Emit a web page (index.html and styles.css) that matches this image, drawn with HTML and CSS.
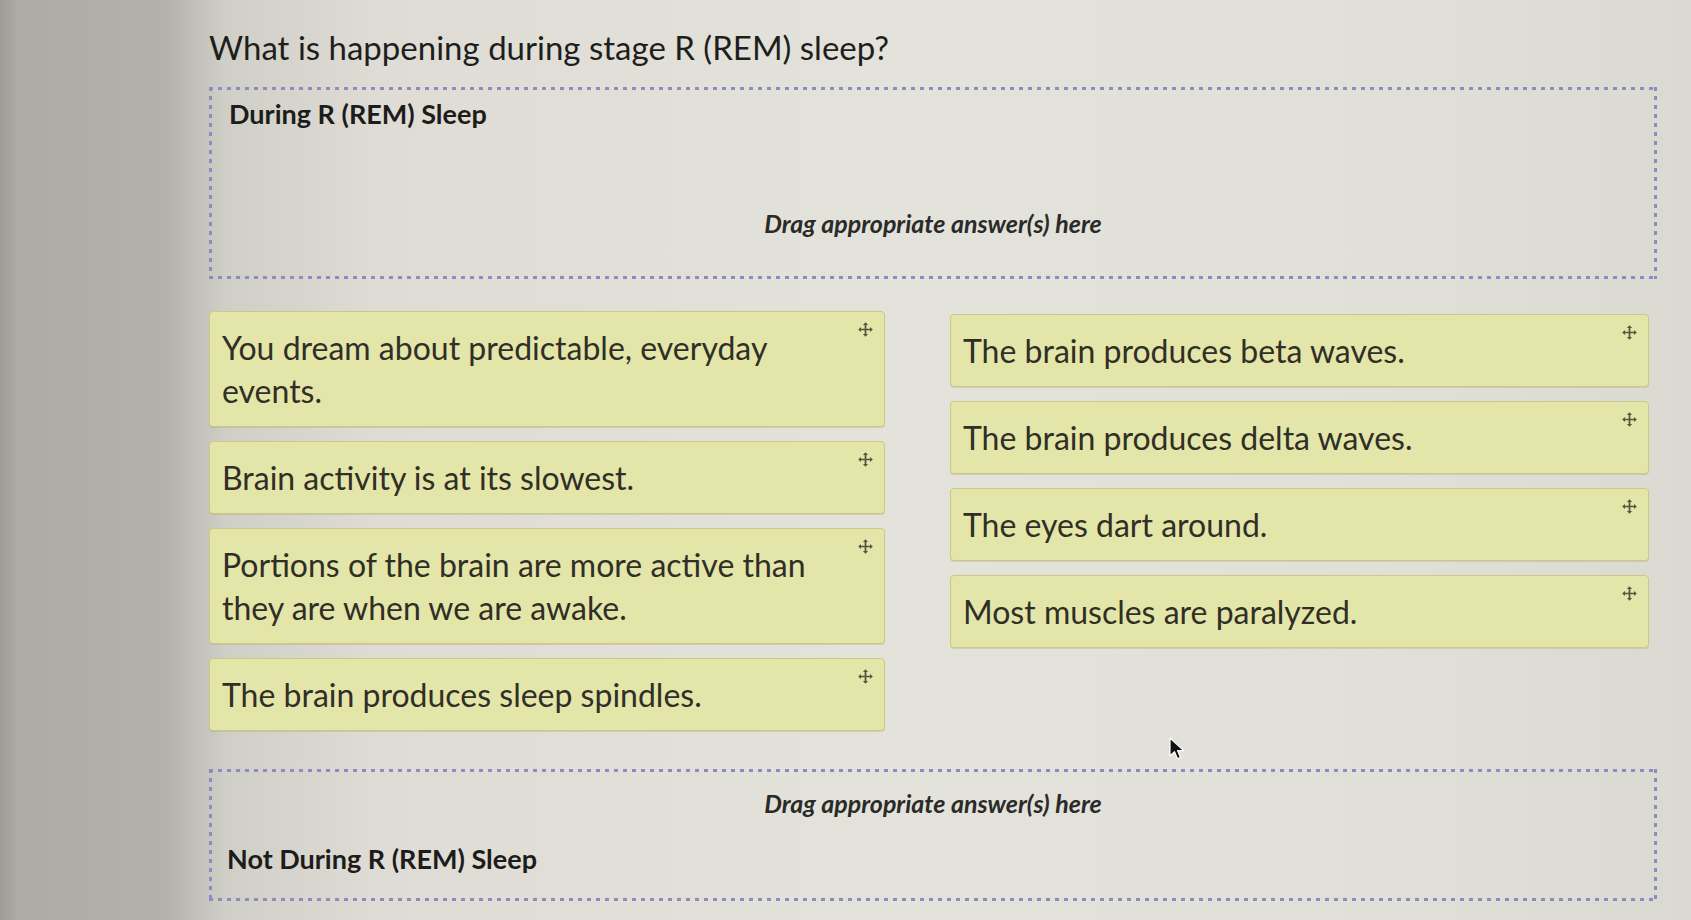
FILE: index.html
```html
<!DOCTYPE html>
<html lang="en">
<head>
<meta charset="utf-8">
<title>Stage R sleep – sorting question</title>
<link rel="stylesheet" href="styles.css">
</head>
<body>
<main class="question">
  <h1 class="prompt">What is happening during stage R (REM) sleep?</h1>

  <section class="zone zone-top">
    <h2 class="zone-label">During R (REM) Sleep</h2>
    <p class="zone-hint">Drag appropriate answer(s) here</p>
  </section>

  <div class="bank">
    <div class="col">
      <div class="card"><span>You dream about predictable, everyday events.</span><svg class="grip" viewBox="0 0 14 14"><path d="M7 2v10M2 7h10"/><path class="tip" d="M7 0.2l2.4 2.6h-4.8zM7 13.8l2.4-2.6h-4.8zM0.2 7l2.6-2.4v4.8zM13.8 7l-2.6-2.4v4.8z"/></svg></div>
      <div class="card"><span>Brain activity is at its slowest.</span><svg class="grip" viewBox="0 0 14 14"><path d="M7 2v10M2 7h10"/><path class="tip" d="M7 0.2l2.4 2.6h-4.8zM7 13.8l2.4-2.6h-4.8zM0.2 7l2.6-2.4v4.8zM13.8 7l-2.6-2.4v4.8z"/></svg></div>
      <div class="card"><span>Portions of the brain are more active than they are when we are awake.</span><svg class="grip" viewBox="0 0 14 14"><path d="M7 2v10M2 7h10"/><path class="tip" d="M7 0.2l2.4 2.6h-4.8zM7 13.8l2.4-2.6h-4.8zM0.2 7l2.6-2.4v4.8zM13.8 7l-2.6-2.4v4.8z"/></svg></div>
      <div class="card"><span>The brain produces sleep spindles.</span><svg class="grip" viewBox="0 0 14 14"><path d="M7 2v10M2 7h10"/><path class="tip" d="M7 0.2l2.4 2.6h-4.8zM7 13.8l2.4-2.6h-4.8zM0.2 7l2.6-2.4v4.8zM13.8 7l-2.6-2.4v4.8z"/></svg></div>
    </div>
    <div class="col col-right">
      <div class="card"><span>The brain produces beta waves.</span><svg class="grip" viewBox="0 0 14 14"><path d="M7 2v10M2 7h10"/><path class="tip" d="M7 0.2l2.4 2.6h-4.8zM7 13.8l2.4-2.6h-4.8zM0.2 7l2.6-2.4v4.8zM13.8 7l-2.6-2.4v4.8z"/></svg></div>
      <div class="card"><span>The brain produces delta waves.</span><svg class="grip" viewBox="0 0 14 14"><path d="M7 2v10M2 7h10"/><path class="tip" d="M7 0.2l2.4 2.6h-4.8zM7 13.8l2.4-2.6h-4.8zM0.2 7l2.6-2.4v4.8zM13.8 7l-2.6-2.4v4.8z"/></svg></div>
      <div class="card"><span>The eyes dart around.</span><svg class="grip" viewBox="0 0 14 14"><path d="M7 2v10M2 7h10"/><path class="tip" d="M7 0.2l2.4 2.6h-4.8zM7 13.8l2.4-2.6h-4.8zM0.2 7l2.6-2.4v4.8zM13.8 7l-2.6-2.4v4.8z"/></svg></div>
      <div class="card"><span>Most muscles are paralyzed.</span><svg class="grip" viewBox="0 0 14 14"><path d="M7 2v10M2 7h10"/><path class="tip" d="M7 0.2l2.4 2.6h-4.8zM7 13.8l2.4-2.6h-4.8zM0.2 7l2.6-2.4v4.8zM13.8 7l-2.6-2.4v4.8z"/></svg></div>
    </div>
  </div>

  <section class="zone zone-bottom">
    <p class="zone-hint">Drag appropriate answer(s) here</p>
    <h2 class="zone-label">Not During R (REM) Sleep</h2>
  </section>
</main>

<svg class="pointer" viewBox="0 0 16 24" aria-hidden="true"><path d="M1 1v18l4.5-4.3 3 7 3-1.3-3-6.8h6.2z" fill="#111" stroke="#fff" stroke-width="1.2" stroke-linejoin="round"/></svg>
</body>
</html>
```

FILE: styles.css
```css
html, body {
  margin: 0;
  height: 100%;
}

body {
  font-family: Lato, "Liberation Sans", sans-serif;
  color: #242420;
  background: linear-gradient(90deg, #9d9c95 0, #adaca4 18px, #b3b2aa 165px, #d0cfc7 225px, #dedcd5 380px, #e3e2db 900px, #e1e0d8 1400px, #dbdad2 100%);
  overflow: hidden;
  position: relative;
}

.question {
  width: 1448px;
  padding: 27px 0 0 209px;
  display: flex;
  flex-direction: column;
}

.prompt {
  margin: 0 0 20px;
  font-size: 33px;
  line-height: 40px;
  font-weight: 400;
  color: #1e1e1c;
}

/* Drop target drawn with square purple dots */
.zone {
  --dot: #8d8ac4;
  background:
    repeating-linear-gradient(90deg, var(--dot) 0 4px, transparent 4px 9px) top left / 100% 3px no-repeat,
    repeating-linear-gradient(90deg, var(--dot) 0 4px, transparent 4px 9px) bottom left / 100% 3px no-repeat,
    repeating-linear-gradient(180deg, var(--dot) 0 4px, transparent 4px 9px) top left / 3px 100% no-repeat,
    repeating-linear-gradient(180deg, var(--dot) 0 4px, transparent 4px 9px) top right / 3px 100% no-repeat;
  display: flex;
  flex-direction: column;
  box-sizing: border-box;
}

.zone-label {
  margin: 0;
  font-size: 27px;
  line-height: 32px;
  font-weight: 700;
  color: #1c1c1a;
}

.zone-hint {
  margin: 0;
  text-align: center;
  font-size: 25px;
  line-height: 30px;
  font-weight: 700;
  font-style: italic;
  color: #2a2a28;
}

.zone-top {
  height: 192px;
  padding: 11px 20px 0;
}

.zone-top .zone-hint {
  margin-top: 78px;
}

.zone-bottom {
  margin-top: 38px;
  height: 132px;
  padding: 19px 18px 0;
}

.zone-bottom .zone-hint {
  margin-bottom: 25px;
}

.bank {
  margin-top: 32px;
  display: grid;
  grid-template-columns: 676px 699px;
  column-gap: 65px;
  align-items: start;
}

.col {
  display: flex;
  flex-direction: column;
  gap: 14px;
}

.col-right {
  padding-top: 3px;
}

.card {
  position: relative;
  background: #e4e5a8;
  border: 1.5px solid #cdc982;
  border-radius: 4px;
  padding: 14px 60px 14px 12px;
  font-size: 32px;
  line-height: 43px;
  color: #2f2f27;
  box-shadow: 0 1px 0 rgba(150, 145, 90, 0.25);
}

/* four-way move handle */
.grip {
  position: absolute;
  top: 10px;
  right: 11px;
  width: 15px;
  height: 15px;
  stroke: #56553f;
  stroke-width: 1.6;
  fill: none;
}

.grip .tip {
  fill: #56553f;
  stroke: none;
}

.pointer {
  position: absolute;
  left: 1169px;
  top: 737px;
  width: 16px;
  height: 24px;
}
```
